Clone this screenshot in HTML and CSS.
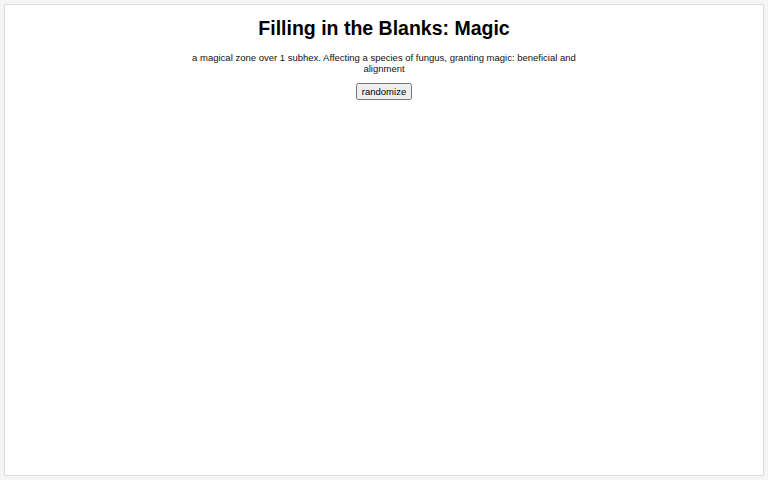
FILE: index.html
```html
<!DOCTYPE html>
<html lang="en">
<head>
    <meta charset="UTF-8">
    <meta name="viewport" content="width=device-width, initial-scale=1.0">
    <title>Filling in the Blanks: Magic</title>
    <link rel="stylesheet" href="styles.css">
</head>
<body>
    <div class="page">
        <h1>Filling in the Blanks: Magic</h1>
        <p class="result" id="result">a magical zone over 1 subhex. Affecting a species of fungus, granting magic: beneficial and alignment</p>
        <button class="roll" id="roll">randomize</button>
    </div>
</body>
</html>
```

FILE: styles.css
```css
body {
    font-family: "Liberation Sans", Arial, sans-serif;
    margin: 0;
    padding: 4px;
    background-color: #f4f4f4;
    height: 480px;
    box-sizing: border-box;
}

.page {
    height: 100%;
    box-sizing: border-box;
    background-color: #fff;
    border: 1px solid #ddd;
    display: flex;
    flex-direction: column;
    align-items: center;
    padding-top: 12px;
}

h1 {
    margin: 0;
    font-size: 19.5px;
    line-height: 23px;
    color: #000;
}

.result {
    max-width: 400px;
    margin: 12px 0 9px;
    font-size: 9.5px;
    line-height: 11px;
    text-align: center;
    color: #111;
}

.roll {
    font-family: "Liberation Sans", Arial, sans-serif;
    font-size: 9.5px;
    padding: 1px 4px;
}
```
